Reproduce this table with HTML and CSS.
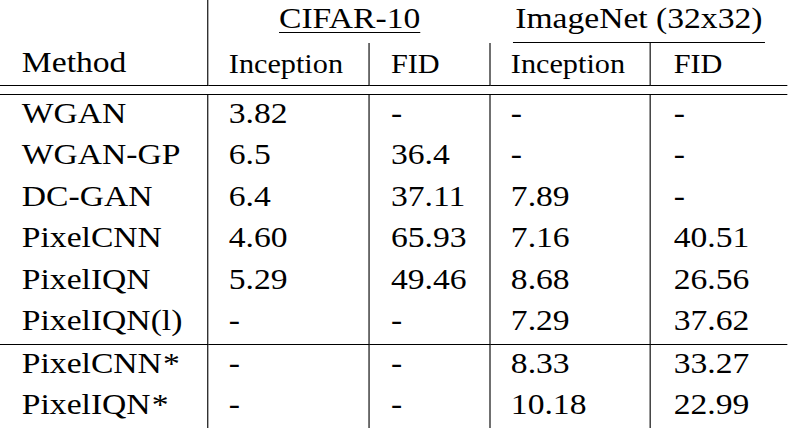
FILE: index.html
```html
<!DOCTYPE html>
<html>
<head>
    <title>Results</title>
    <link rel="stylesheet" href="styles.css">
</head>
<body>
    <table class="results">
        <colgroup>
            <col class="col-method">
            <col class="col-cifar-is">
            <col class="col-cifar-fid">
            <col class="col-inet-is">
            <col class="col-inet-fid">
        </colgroup>
        <tr class="group-row">
            <td class="v"></td>
            <td colspan="2" class="group"><span class="underlined">CIFAR-10</span></td>
            <td colspan="2" class="group"><div class="cline">ImageNet (32x32)</div></td>
        </tr>
        <tr class="head-row">
            <td class="v method">Method</td>
            <td class="v metric">Inception</td>
            <td class="v metric">FID</td>
            <td class="v metric">Inception</td>
            <td class="metric">FID</td>
        </tr>
        <tr class="gap"><td colspan="5"></td></tr>
        <tr class="data">
            <td class="v">WGAN</td><td class="v">3.82</td><td class="v">-</td><td class="v">-</td><td>-</td>
        </tr>
        <tr class="data">
            <td class="v">WGAN-GP</td><td class="v">6.5</td><td class="v">36.4</td><td class="v">-</td><td>-</td>
        </tr>
        <tr class="data">
            <td class="v">DC-GAN</td><td class="v">6.4</td><td class="v">37.11</td><td class="v">7.89</td><td>-</td>
        </tr>
        <tr class="data">
            <td class="v">PixelCNN</td><td class="v">4.60</td><td class="v">65.93</td><td class="v">7.16</td><td>40.51</td>
        </tr>
        <tr class="data">
            <td class="v">PixelIQN</td><td class="v">5.29</td><td class="v">49.46</td><td class="v">8.68</td><td>26.56</td>
        </tr>
        <tr class="data split">
            <td class="v">PixelIQN(l)</td><td class="v">-</td><td class="v">-</td><td class="v">7.29</td><td>37.62</td>
        </tr>
        <tr class="data">
            <td class="v">PixelCNN<span class="star">*</span></td><td class="v">-</td><td class="v">-</td><td class="v">8.33</td><td>33.27</td>
        </tr>
        <tr class="data">
            <td class="v">PixelIQN<span class="star">*</span></td><td class="v">-</td><td class="v">-</td><td class="v">10.18</td><td>22.99</td>
        </tr>
    </table>
</body>
</html>
```

FILE: styles.css
```css
body {
    margin: 0;
    background-color: #fff;
}
.results {
    border-collapse: separate;
    border-spacing: 0;
    table-layout: fixed;
    width: 702.7px;
    transform: scaleX(1.12);
    transform-origin: 0 0;
    font-family: "Liberation Serif", "Times New Roman", serif;
    font-size: 30px;
    color: #000;
}
.col-method { width: 186.3px; }
.col-cifar-is { width: 143.8px; }
.col-cifar-fid { width: 108px; }
.col-inet-is { width: 142.9px; }
.col-inet-fid { width: 121.7px; }
.results td {
    padding: 0;
    white-space: nowrap;
    vertical-align: top;
}
.results td.v {
    border-right: 1px solid #000;
}
.head-row td:nth-child(1),
.data td:nth-child(1) { padding-left: 19.5px; }
.head-row td:nth-child(2),
.data td:nth-child(2) { padding-left: 18px; }
.head-row td:nth-child(3),
.data td:nth-child(3) { padding-left: 19px; }
.head-row td:nth-child(4),
.data td:nth-child(4) { padding-left: 18px; }
.head-row td:nth-child(5),
.data td:nth-child(5) { padding-left: 20.5px; }

.group-row td {
    height: 43px;
}
.results td.group {
    text-align: center;
    line-height: 36px;
}
.underlined {
    text-decoration: underline;
    text-decoration-thickness: 1px;
    text-underline-offset: 3.5px;
}
.cline {
    margin: 0 19.6px;
    padding-bottom: 5.5px;
    border-bottom: 1px solid #000;
}

.head-row td {
    height: 42px;
    border-bottom: 1px solid #000;
}
.head-row .method {
    line-height: 38px;
}
.head-row .metric {
    font-size: 27px;
    line-height: 42px;
}

.gap td {
    height: 7.5px;
    font-size: 0;
    line-height: 0;
    border-bottom: 1px solid #000;
}

.data td {
    height: 41.5px;
    line-height: 35.5px;
}
.data.split td {
    border-bottom: 1px solid #000;
}
.star {
    margin-left: 1px;
}
```
